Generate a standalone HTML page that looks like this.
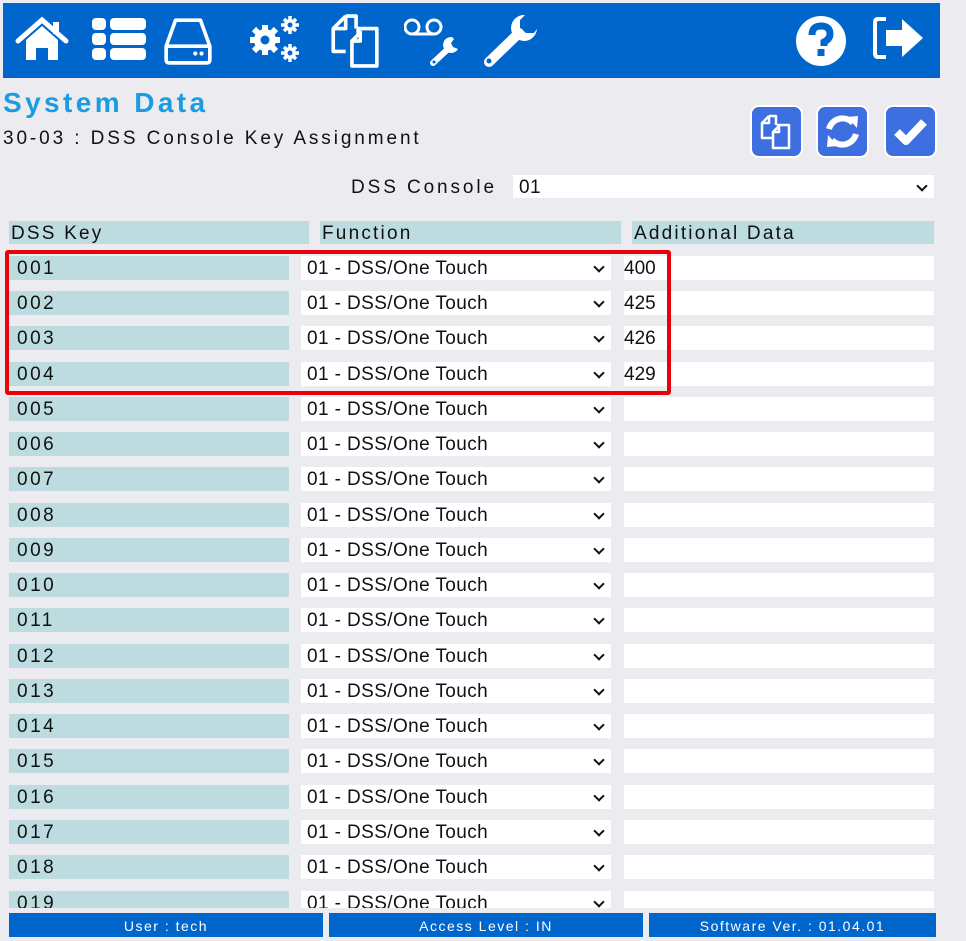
<!DOCTYPE html>
<html><head><meta charset="utf-8"><style>
*{box-sizing:border-box;margin:0;padding:0}
body{width:966px;height:941px;background:#ececf0;font-family:"Liberation Sans",sans-serif;position:relative;overflow:hidden}
.bar{position:absolute;left:3px;top:3px;width:937px;height:75px;background:#0066cc}
.ic{position:absolute;top:15px}
.t1{position:absolute;left:3px;top:87px;font-size:28px;font-weight:bold;color:#1b9ce2;letter-spacing:3.4px}
.t2{position:absolute;left:3px;top:128px;font-size:19px;letter-spacing:2.9px;color:#111}
.btn{position:absolute;top:105px;width:53px;height:53px;border-radius:9px;background:#3d6fe0;border:2px solid #fff}
.lbl{position:absolute;font-size:19px;letter-spacing:2.9px;color:#111}
.hd{position:absolute;top:221px;height:23px;background:#bcdce0;font-size:19px;letter-spacing:2.2px;line-height:25px;padding-left:2px;color:#111}
.k{position:absolute;left:9px;width:280px;height:24px;background:#bcdce0;font-size:19px;letter-spacing:2.5px;line-height:25px;padding-left:8px;color:#111}
.s{position:absolute;left:301px;width:310px;height:24px;background:#fff;font-size:19px;letter-spacing:0.4px;line-height:25px;padding-left:6px;color:#111}
.s:after{content:"";position:absolute;right:8px;top:7px;width:6px;height:6px;border-right:2px solid #111;border-bottom:2px solid #111;transform:rotate(45deg)}
.a{position:absolute;left:624px;width:310px;height:24px;background:#fff;font-size:19px;line-height:25px;color:#111}
.clip{position:absolute;left:0;top:0;width:966px;height:908px;overflow:hidden}
.ft{position:absolute;top:913px;height:24px;background:#0066cc;color:#fff;font-size:14px;letter-spacing:1.5px;text-align:center;line-height:26px}
</style></head><body>
<div class="bar"></div>
<svg class="ic" style="left:15px;top:16px" width="54" height="46" viewBox="0 0 54 46"><path d="M3 25 L27 4 L51 25" fill="none" stroke="#fff" stroke-width="5" stroke-linecap="round"/><path d="M11 24 L27 10 L43 24 V44 H33 V32 H21 V44 H11Z" fill="#fff"/><rect x="38" y="6" width="6" height="12" fill="#fff"/></svg>
<svg class="ic" style="left:92px;top:17px" width="56" height="48" viewBox="0 0 56 48"><g fill="#fff"><rect x="0" y="1" width="14" height="12" rx="4"/><rect x="18" y="1" width="36" height="12" rx="4"/><rect x="0" y="16" width="14" height="12" rx="4"/><rect x="18" y="16" width="36" height="12" rx="4"/><rect x="0" y="31" width="14" height="12" rx="4"/><rect x="18" y="31" width="36" height="12" rx="4"/></g></svg>
<svg class="ic" style="left:162px;top:15px" width="52" height="50" viewBox="0 0 50 48"><path d="M4 30 L13 5 H37 L46 30 V43 Q46 46 43 46 H7 Q4 46 4 43Z M4 30 H46" fill="none" stroke="#fff" stroke-width="3.5" stroke-linejoin="round"/><circle cx="32" cy="37" r="2" fill="#fff"/><circle cx="38" cy="37" r="2" fill="#fff"/></svg>
<svg class="ic" style="left:246px;top:14px" width="56" height="50" viewBox="0 0 56 50"><g fill="#fff"><circle cx="19" cy="26" r="11"/><g stroke="#fff" stroke-width="6"><path d="M19 11V41M4 26H34M8 15L30 37M30 15L8 37"/></g><circle cx="44" cy="11" r="6"/><path stroke="#fff" stroke-width="3.5" d="M44 2V20M35 11H53M38 5L50 17M50 5L38 17"/><circle cx="44" cy="39" r="6"/><path stroke="#fff" stroke-width="3.5" d="M44 30V48M35 39H53M38 33L50 45M50 33L38 45"/></g><circle cx="19" cy="26" r="4.5" fill="#0066cc"/><circle cx="44" cy="11" r="2.5" fill="#0066cc"/><circle cx="44" cy="39" r="2.5" fill="#0066cc"/></svg>
<svg class="ic" style="left:327px;top:14px" width="54" height="54" viewBox="0 0 52 52"><g fill="none" stroke="#fff" stroke-width="3.5" stroke-linejoin="round"><path d="M18 2 H28 V14 M18 2 L6 14 V36 H18"/><path d="M6 14 H18 V2"/><path d="M30 14 H48 V50 H24 V26 L30 20Z M24 26 H32 V16"/></g></svg>
<svg class="ic" style="left:404px;top:15px" width="60" height="52" viewBox="0 0 60 52"><g fill="none" stroke="#fff" stroke-width="3"><circle cx="8" cy="12" r="7"/><circle cx="30" cy="12" r="7"/><path d="M8 19 H30"/></g><path d="M48 22 a8 8 0 1 0 6 12 l-5 -2 -2 -4 3 -4z" fill="#fff"/><path d="M44 34 L29 48" stroke="#fff" stroke-width="6" stroke-linecap="round"/><circle cx="30" cy="47" r="1.5" fill="#0066cc"/></svg>
<svg class="ic" style="left:477px;top:13px" width="62" height="54" viewBox="0 0 62 52"><path d="M60 15 a13 13 0 1 1 -12 -14 l-5 5 v8 l6 5 h8z" fill="#fff"/><path d="M42 19 L12 48" stroke="#fff" stroke-width="10" stroke-linecap="round"/><circle cx="12" cy="47" r="2.5" fill="#0066cc"/></svg>
<svg class="ic" style="left:793px;top:14px" width="56" height="54" viewBox="0 0 56 54"><circle cx="28" cy="27" r="25" fill="#fff"/><path d="M19 21 Q19 12 28 12 Q37 12 37 20 Q37 25 31 28 V32" fill="none" stroke="#0066cc" stroke-width="7"/><rect x="24.5" y="35" width="7" height="7" fill="#0066cc"/></svg>
<svg class="ic" style="left:872px" width="54" height="46" viewBox="0 0 54 46"><path d="M14 4 H6 Q3 4 3 8 V38 Q3 42 6 42 H14" fill="none" stroke="#fff" stroke-width="4"/><path d="M14 15 H30 V4 L51 23 L30 42 V31 H14Z" fill="#fff"/></svg>
<div class="t1">System Data</div>
<div class="t2">30-03 : DSS Console Key Assignment</div>
<div class="btn" style="left:750px"><svg width="49" height="49" viewBox="0 0 49 49"><g fill="none" stroke="#fff" stroke-width="2.5" stroke-linejoin="round"><path d="M17 9 H24 V18 M17 9 L10 16 V31 H20 M10 16 H17 V9"/><path d="M26 18 H37 V41 H21 V25 L26 20Z M21 25 H27 V19"/></g></svg></div>
<div class="btn" style="left:816px"><svg width="49" height="49" viewBox="0 0 49 49"><g fill="none" stroke="#fff" stroke-width="6"><path d="M11 22 A14 14 0 0 1 35 16"/><path d="M38 27 A14 14 0 0 1 14 33"/></g><path d="M29 10 L40 9 L39 21Z M20 39 L9 40 L10 28Z" fill="#fff"/></svg></div>
<div class="btn" style="left:884px"><svg width="49" height="49" viewBox="0 0 49 49"><path d="M11 25 L20 34 L38 15" fill="none" stroke="#fff" stroke-width="8" stroke-linejoin="round"/></svg></div>
<div class="lbl" style="left:351px;top:177px">DSS Console</div>
<div class="s" style="left:513px;top:175px;width:421px;height:23px">01</div>
<div class="clip">
<div class="hd" style="left:9px;width:300px">DSS Key</div>
<div class="hd" style="left:320px;width:301px">Function</div>
<div class="hd" style="left:632px;width:302px">Additional Data</div>
<div class="k" style="top:256px">001</div><div class="s" style="top:256px">01 - DSS/One Touch</div><div class="a" style="top:256px">400</div>
<div class="k" style="top:291px">002</div><div class="s" style="top:291px">01 - DSS/One Touch</div><div class="a" style="top:291px">425</div>
<div class="k" style="top:326px">003</div><div class="s" style="top:326px">01 - DSS/One Touch</div><div class="a" style="top:326px">426</div>
<div class="k" style="top:362px">004</div><div class="s" style="top:362px">01 - DSS/One Touch</div><div class="a" style="top:362px">429</div>
<div class="k" style="top:397px">005</div><div class="s" style="top:397px">01 - DSS/One Touch</div><div class="a" style="top:397px"></div>
<div class="k" style="top:432px">006</div><div class="s" style="top:432px">01 - DSS/One Touch</div><div class="a" style="top:432px"></div>
<div class="k" style="top:467px">007</div><div class="s" style="top:467px">01 - DSS/One Touch</div><div class="a" style="top:467px"></div>
<div class="k" style="top:503px">008</div><div class="s" style="top:503px">01 - DSS/One Touch</div><div class="a" style="top:503px"></div>
<div class="k" style="top:538px">009</div><div class="s" style="top:538px">01 - DSS/One Touch</div><div class="a" style="top:538px"></div>
<div class="k" style="top:573px">010</div><div class="s" style="top:573px">01 - DSS/One Touch</div><div class="a" style="top:573px"></div>
<div class="k" style="top:608px">011</div><div class="s" style="top:608px">01 - DSS/One Touch</div><div class="a" style="top:608px"></div>
<div class="k" style="top:644px">012</div><div class="s" style="top:644px">01 - DSS/One Touch</div><div class="a" style="top:644px"></div>
<div class="k" style="top:679px">013</div><div class="s" style="top:679px">01 - DSS/One Touch</div><div class="a" style="top:679px"></div>
<div class="k" style="top:714px">014</div><div class="s" style="top:714px">01 - DSS/One Touch</div><div class="a" style="top:714px"></div>
<div class="k" style="top:749px">015</div><div class="s" style="top:749px">01 - DSS/One Touch</div><div class="a" style="top:749px"></div>
<div class="k" style="top:785px">016</div><div class="s" style="top:785px">01 - DSS/One Touch</div><div class="a" style="top:785px"></div>
<div class="k" style="top:820px">017</div><div class="s" style="top:820px">01 - DSS/One Touch</div><div class="a" style="top:820px"></div>
<div class="k" style="top:855px">018</div><div class="s" style="top:855px">01 - DSS/One Touch</div><div class="a" style="top:855px"></div>
<div class="k" style="top:891px">019</div><div class="s" style="top:891px">01 - DSS/One Touch</div><div class="a" style="top:891px"></div>
<div style="position:absolute;left:5px;top:250px;width:666px;height:145px;border:4px solid #e8000a;border-radius:3px"></div>
</div>
<div class="ft" style="left:9px;width:314px">User : tech</div>
<div class="ft" style="left:329px;width:314px">Access Level : IN</div>
<div class="ft" style="left:649px;width:287px">Software Ver. : 01.04.01</div>
</body></html>
